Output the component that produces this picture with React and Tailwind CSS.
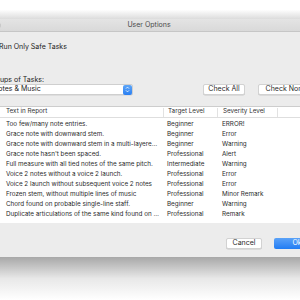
import React from 'react';

const rows = [
  ['Too few/many note entries.', 'Beginner', 'ERROR!'],
  ['Grace note with downward stem.', 'Beginner', 'Error'],
  ['Grace note with downward stem in a multi-layered measure.', 'Beginner', 'Warning'],
  ["Grace note hasn't been spaced.", 'Professional', 'Alert'],
  ['Full measure with all tied notes of the same pitch.', 'Intermediate', 'Warning'],
  ['Voice 2 notes without a voice 2 launch.', 'Professional', 'Error'],
  ['Voice 2 launch without subsequent voice 2 notes', 'Professional', 'Error'],
  ['Frozen stem, without multiple lines of music', 'Professional', 'Minor Remark'],
  ['Chord found on probable single-line staff.', 'Beginner', 'Warning'],
  ['Duplicate articulations of the same kind found on note.', 'Professional', 'Remark'],
];

function Button({ children, className = '' }) {
  return (
    <div
      className={`h-[11px] flex items-center justify-center rounded-[2px] bg-white border border-[#d2d2d2] text-[7px] text-[#2a2a2a] shadow-[0_0.5px_0.5px_rgba(0,0,0,0.15)] ${className}`}
    >
      {children}
    </div>
  );
}

export default function App() {
  return (
    <div
      className="w-[300px] h-[300px] overflow-hidden bg-white flex flex-col"
      style={{ fontFamily: 'Inter, "Noto Sans", sans-serif' }}
    >
      {/* shadow above window */}
      <div className="h-[19px] shrink-0 bg-gradient-to-b from-white via-white to-[#dcdcdc]" />

      <div className="ml-[-32px] w-[380px] shrink-0 flex flex-col">
        {/* Title bar */}
        <div className="h-[13px] bg-gradient-to-b from-[#e4e4e4] to-[#d9d9d9] border-b border-[#c6c6c6] flex items-center justify-center relative">
          <span className="text-[7px] text-[#4a4a4a] ml-[-18px]">User Options</span>
          <div className="absolute left-[26px] top-[3px] w-[7px] h-[7px] rounded-full bg-[#d2d2d2] border border-[#c4c4c4]" />
        </div>

        {/* Body */}
        <div className="bg-[#ececec] pl-[20px] pb-[8px] flex flex-col">
          <div className="mt-[10px] h-[10px] flex items-center gap-[3px]">
            <div className="w-[8px] h-[8px] rounded-[2px] bg-white border border-[#b8b8b8]" />
            <span className="text-[7px] text-[#222]">Run Only Safe Tasks</span>
          </div>

          <div className="mt-[24px] h-[8px] flex items-center text-[7px] text-[#222]">Groups of Tasks:</div>

          <div className="h-[11px] flex items-center">
            <div className="w-[145px] h-[11px] bg-white border border-[#cfcfcf] rounded-[2px] flex items-center justify-between shadow-[0_0.5px_0.5px_rgba(0,0,0,0.12)]">
              <span className="pl-[4px] text-[7px] text-[#222]">Notes &amp; Music</span>
              <div className="w-[9px] h-[10px] rounded-[2px] bg-gradient-to-b from-[#5ea6f7] to-[#2a7ff2] flex items-center justify-center">
                <svg width="5" height="7" viewBox="0 0 5 7" fill="none" stroke="white" strokeWidth="0.8">
                  <path d="M1 2.6 L2.5 1.1 L4 2.6" />
                  <path d="M1 4.4 L2.5 5.9 L4 4.4" />
                </svg>
              </div>
            </div>
            <Button className="ml-[70px] w-[42px]">Check All</Button>
            <Button className="ml-[13px] w-[56px]">Check None</Button>
          </div>

          {/* Table */}
          <div className="mt-[11px] bg-white border-t border-[#cdcdcd] flex flex-col">
            <div className="h-[11px] flex items-center border-b border-[#dedede] text-[6.3px] text-[#333]">
              <div className="w-[175px] pl-[18px]">Text in Report</div>
              <div className="w-[54px] h-[9px] border-l border-[#e2e2e2] pl-[4px] flex items-center">Target Level</div>
              <div className="w-[60px] h-[9px] border-l border-[#e2e2e2] pl-[5px] flex items-center">Severity Level</div>
              <div className="h-[9px] border-l border-[#e2e2e2]" />
            </div>
            <div className="h-[105px] flex flex-col text-[6.3px] text-[#2a2a2a]">
              {rows.map((r, i) => (
                <div key={i} className={`h-[10px] flex items-center ${i === 0 ? 'mt-[1px]' : ''}`}>
                  <div className="w-[175px] pl-[18px] pr-[3px] truncate leading-[10px]">{r[0]}</div>
                  <div className="w-[54px] pl-[4px] leading-[10px]">{r[1]}</div>
                  <div className="w-[60px] pl-[5px] leading-[10px]">{r[2]}</div>
                </div>
              ))}
            </div>
          </div>

          <div className="mt-[15px] h-[11px] flex items-center">
            <Button className="ml-[238px] w-[36px]">Cancel</Button>
            <div className="ml-[12px] w-[46px] h-[11px] rounded-[2px] bg-gradient-to-b from-[#5aa2f8] to-[#1f7cf3] flex items-center justify-center text-[7px] text-white">
              Ok
            </div>
          </div>
        </div>
      </div>

      {/* shadow below window */}
      <div className="flex-1 bg-gradient-to-b from-[#a8a8a8] via-[#e8e8e8] to-white" />
    </div>
  );
}
